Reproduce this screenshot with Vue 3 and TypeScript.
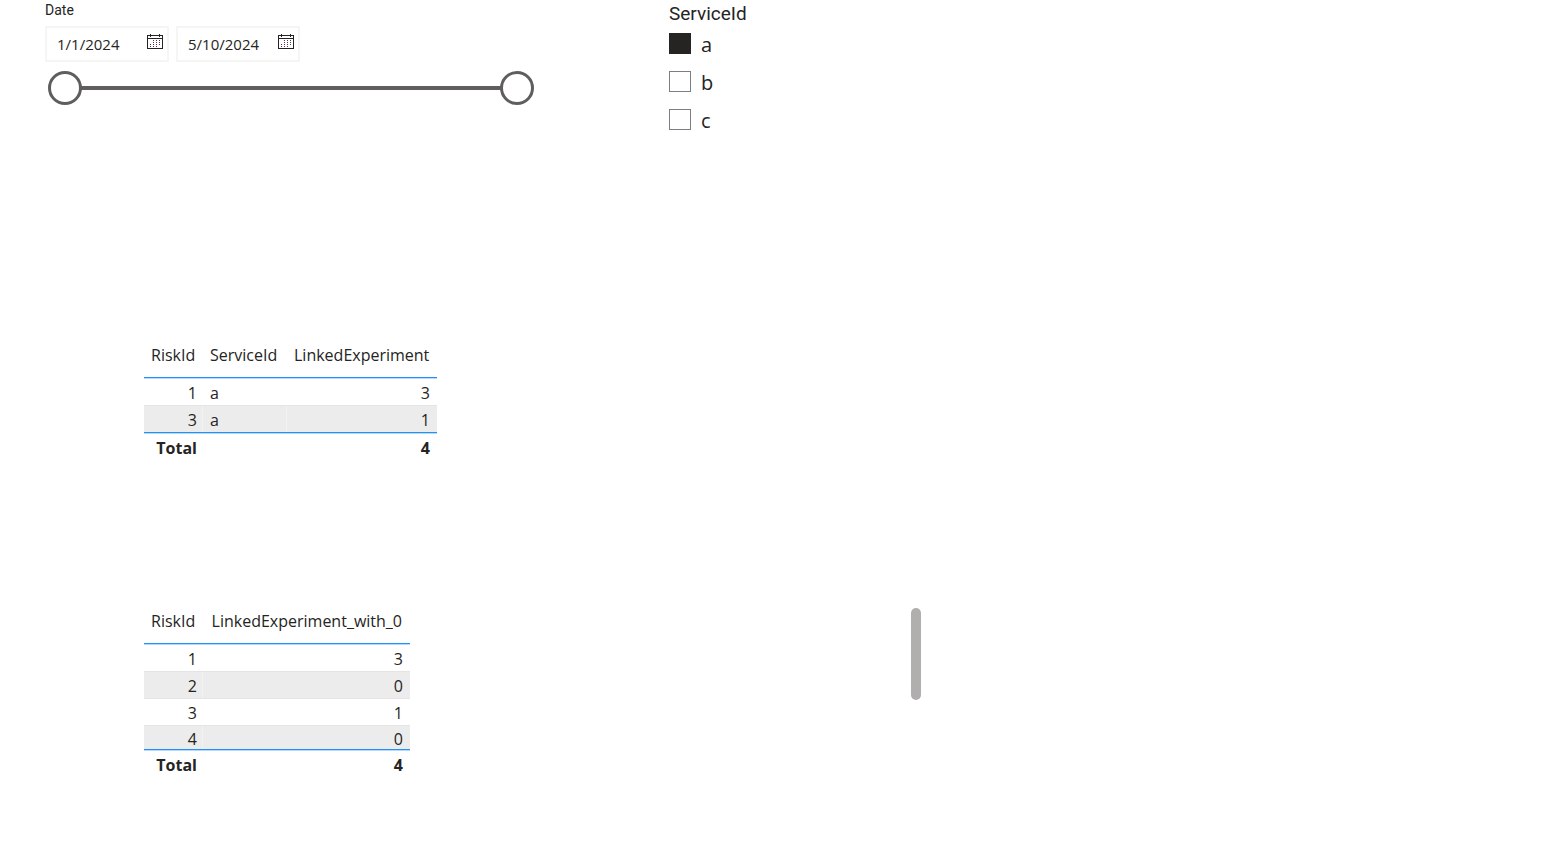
<script setup lang="ts">
import { ref } from 'vue'

interface Column {
  label: string
  align: 'left' | 'right'
  size: 'narrow' | 'medium' | 'wide' | 'full'
}
interface Report {
  id: string
  columns: Column[]
  rows: (string | number)[][]
  total: (string | number)[]
}

const startDate = ref('1/1/2024')
const endDate = ref('5/10/2024')
const rangeStart = ref(0)
const rangeEnd = ref(130)

const services = ref([
  { id: 'a', checked: true },
  { id: 'b', checked: false },
  { id: 'c', checked: false },
])

const linked: Report = {
  id: 'linked',
  columns: [
    { label: 'RiskId', align: 'right', size: 'narrow' },
    { label: 'ServiceId', align: 'left', size: 'medium' },
    { label: 'LinkedExperiment', align: 'right', size: 'wide' },
  ],
  rows: [
    [1, 'a', 3],
    [3, 'a', 1],
  ],
  total: ['Total', '', 4],
}
const linkedWithZero: Report = {
  id: 'linked-zero',
  columns: [
    { label: 'RiskId', align: 'right', size: 'narrow' },
    { label: 'LinkedExperiment_with_0', align: 'right', size: 'full' },
  ],
  rows: [
    [1, 3],
    [2, 0],
    [3, 1],
    [4, 0],
  ],
  total: ['Total', 4],
}
const reports = [linked, linkedWithZero]
</script>

<template>
  <main class="report">
    <div class="slicers">
      <section class="date-slicer">
        <h2 class="date-title">Date</h2>
        <div class="date-fields">
          <div v-for="n in 2" :key="n" class="date-field">
            <input v-if="n === 1" v-model="startDate" type="text" aria-label="Start date" />
            <input v-else v-model="endDate" type="text" aria-label="End date" />
            <button type="button" :aria-label="n === 1 ? 'Pick start date' : 'Pick end date'">
              <svg width="16" height="16" viewBox="0 0 16 16" fill="none" stroke="#252423" shape-rendering="crispEdges">
                <path d="M.5 1.5h15v13H.5zM0 4.5h16M3.5 0v3M12.5 0v3" />
                <path d="M6 6.5h7M6 8.5h7M3 10.5h10M3 12.5h7" stroke="#55305a" stroke-dasharray="1 2" />
              </svg>
            </button>
          </div>
        </div>
        <div class="slider">
          <span class="track"></span>
          <input v-model.number="rangeStart" type="range" min="0" max="130" aria-label="Range start" />
          <input v-model.number="rangeEnd" type="range" min="0" max="130" aria-label="Range end" />
        </div>
      </section>

      <fieldset class="service-slicer">
        <legend>ServiceId</legend>
        <label v-for="service in services" :key="service.id">
          <input v-model="service.checked" type="checkbox" />
          <span>{{ service.id }}</span>
        </label>
      </fieldset>
    </div>

    <div v-for="report in reports" :key="report.id" class="visual-row">
      <div class="visual">
        <table :class="{ clipped: report.rows.length > 3 }">
          <thead>
            <tr>
              <th v-for="col in report.columns" :key="col.label" scope="col" :class="[col.align, col.size]">
                {{ col.label }}
              </th>
            </tr>
          </thead>
          <tbody>
            <tr v-for="(row, r) in report.rows" :key="r">
              <td v-for="(cell, c) in row" :key="c" :class="report.columns[c].align">{{ cell }}</td>
            </tr>
          </tbody>
          <tfoot>
            <tr>
              <td v-for="(cell, c) in report.total" :key="c" :class="report.columns[c].align">{{ cell }}</td>
            </tr>
          </tfoot>
        </table>
      </div>
      <div v-if="report.id === 'linked-zero'" class="scroll-thumb"></div>
    </div>
  </main>
</template>

<style>
body {
  margin: 0;
  background: #fff;
}
</style>

<style scoped>
.report {
  box-sizing: border-box;
  min-height: 100vh;
  padding-left: 45px;
  color: #252423;
  font: 16px/20px "Open Sans", "Noto Sans", sans-serif;
}
.slicers {
  display: grid;
  grid-template-columns: 624fr 886fr;
  min-height: 336px;
  align-items: start;
}
.date-slicer {
  margin-right: 134px;
}
.date-title {
  margin: 0;
  padding: 2px 0 8px;
  font: 400 14px/16px Roboto, sans-serif;
}
.date-fields {
  display: flex;
  gap: 7px;
}
.date-field {
  box-sizing: border-box;
  display: flex;
  width: 124px;
  height: 36px;
  border: 2px solid #f5f5f4;
}
.date-field input {
  flex: 1;
  min-width: 0;
  padding: 0 0 0 10px;
  border: 0;
  background: none;
  color: inherit;
  font: 15px/20px "Open Sans", "Noto Sans", sans-serif;
}
.date-field button {
  width: 20px;
  height: 16px;
  margin-top: 6px;
  padding: 0 4px 0 0;
  border: 0;
  background: none;
  display: flex;
}
.date-field svg {
  flex: none;
}
.slider {
  display: grid;
  align-items: center;
  margin: 9px 1px 0 3px;
}
.slider > * {
  grid-area: 1 / 1;
}
.track {
  height: 4px;
  margin: 0 17px;
  background: #605e5c;
}
.slider input {
  appearance: none;
  height: 34px;
  margin: 0;
  background: none;
  pointer-events: none;
}
.slider input::-webkit-slider-thumb {
  appearance: none;
  box-sizing: border-box;
  width: 34px;
  height: 34px;
  border: 3px solid #605e5c;
  border-radius: 50%;
  background: #fff;
  pointer-events: auto;
}
.service-slicer {
  margin: 0;
  padding: 0;
  border: 0;
}
.service-slicer legend {
  padding: 2px 0 7px;
  font: 19px/24px Roboto, sans-serif;
}
.service-slicer label {
  display: flex;
  gap: 10px;
  height: 38px;
  align-items: flex-start;
  font-size: 20px;
  line-height: 24px;
}
.service-slicer input {
  appearance: none;
  box-sizing: border-box;
  width: 22px;
  height: 21px;
  margin: 0;
  border: 1px solid #7a7f86;
  background: #fff;
}
.service-slicer input:checked {
  border-color: #252423;
  background: #252423;
}
.visual-row {
  display: grid;
  grid-template-columns: 866fr 644fr;
  align-items: start;
  min-height: 266px;
}
.visual {
  padding-left: 99px;
}
.scroll-thumb {
  width: 10px;
  height: 92px;
  margin-top: 6px;
  border-radius: 5px;
  background: #b0afae;
}
table {
  border-collapse: separate;
  border-spacing: 0;
  table-layout: fixed;
  width: min-content;
}
th,
td {
  box-sizing: border-box;
  white-space: nowrap;
}
th {
  height: 42px;
  padding: 0 8px 4px 7px;
  border-bottom: 1px solid #2490f5;
  font-weight: 400;
}
.narrow {
  width: 59px;
}
.medium {
  width: 84px;
}
.wide {
  width: 150px;
}
.full {
  width: 207px;
}
.left {
  text-align: left;
}
.right {
  text-align: right;
}
td {
  height: 27px;
  padding: 2px 6px 0 7px;
}
td:last-child {
  padding-right: 7px;
}
tbody tr:first-child td,
tfoot td {
  box-shadow: inset 0 1px #b4dafc;
}
tbody tr + tr td {
  box-shadow: inset 0 1px #e4e4e4;
}
tbody tr:nth-child(even) td {
  background: #ececec;
}
tbody tr:nth-child(even) td:not(:last-child) {
  box-shadow: inset 0 1px #e4e4e4, inset -1px 0 #f2f2f2;
}
.clipped tbody tr:last-child td {
  height: 24px;
  padding-top: 4px;
}
tfoot td {
  padding-top: 4px;
  border-top: 1px solid #2490f5;
  font-weight: 700;
}
</style>
